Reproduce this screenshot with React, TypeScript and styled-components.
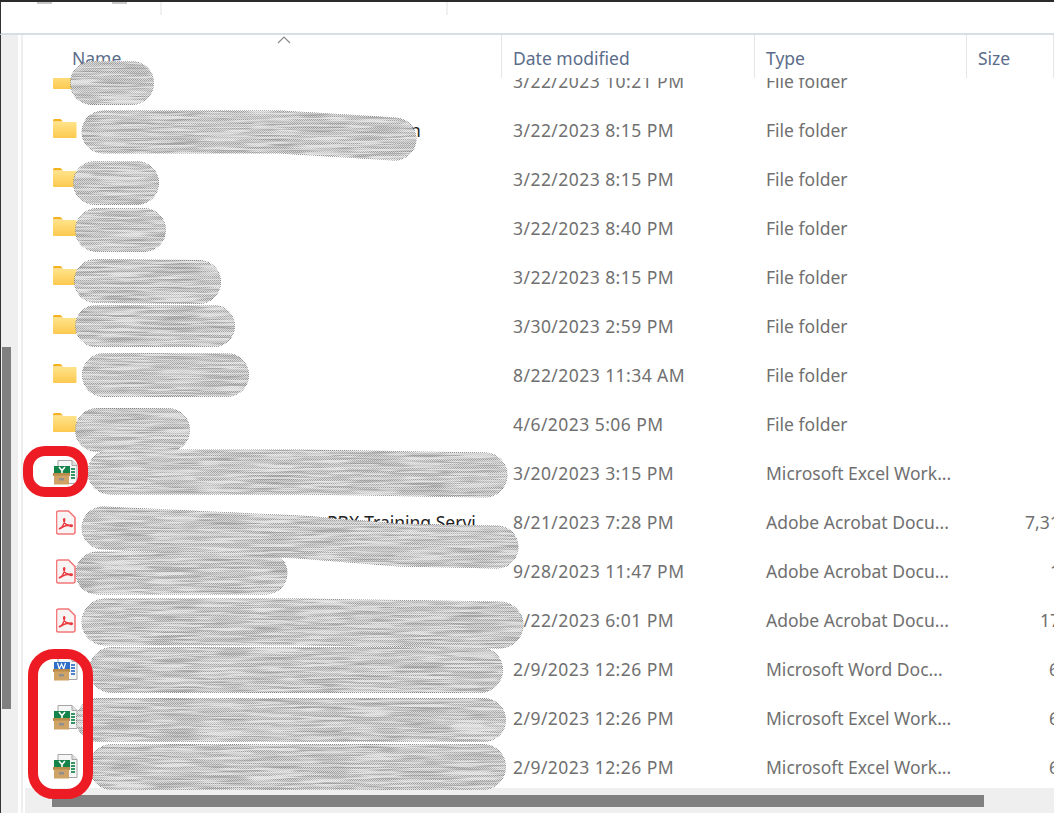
import React from 'react';
import styled, { createGlobalStyle } from 'styled-components';

const GlobalStyle = createGlobalStyle`
	html, body {
		margin: 0;
		padding: 0;
		background: #fff;
	}
	body {
		font-family: "Noto Sans", "Open Sans", sans-serif;
	}
`;

const Frame = styled.div`
	position: relative;
	width: 1054px;
	height: 820px;
	overflow: hidden;
	display: flex;
	flex-direction: column;
	background: #fff;
`;

const Toolbar = styled.div`
	height: 31px;
	flex: none;
	display: flex;
	border-top: 2px solid #2b2b2b;
	border-bottom: 2px solid #d6dee6;
	border-left: 1px solid #333;
`;

const ToolbarGroup = styled.div<{ $width: number }>`
	width: ${(p) => p.$width}px;
	height: 13px;
	flex: none;
	display: flex;
	gap: 60px;
	padding-left: 36px;
	box-sizing: border-box;
	border-right: 2px solid #f0f0f0;
`;

const ToolbarStub = styled.span`
	width: 15px;
	height: 2px;
	background: #c9c9c9;
`;

const Body = styled.div`
	height: 778px;
	flex: none;
	display: flex;
`;

const Rail = styled.div`
	width: 25px;
	flex: none;
	display: flex;
`;

const RailTrack = styled.div`
	width: 18px;
	box-sizing: border-box;
	padding: 312px 7px 0 1px;
	background: #efefef;
	border-left: 1px solid #333;
`;

const RailThumb = styled.div`
	height: 362px;
	width: 9px;
	background: #808080;
`;

const RailEdge = styled.div`
	width: 2px;
	margin-left: 3px;
	background: #eeeeee;
`;

const Main = styled.div`
	flex: 1;
	min-width: 0;
	display: flex;
	flex-direction: column;
`;

const Columns = styled.div`
	display: grid;
	grid-template-columns: 477px 253px 212px 87px;
`;

const Header = styled(Columns)`
	position: relative;
	height: 43px;
	flex: none;
	background: #fff;
	z-index: 1;
`;

const HeaderCell = styled.div<{ $first?: boolean }>`
	display: flex;
	align-items: center;
	box-sizing: border-box;
	padding-left: ${(p) => (p.$first ? 47 : 11)}px;
	padding-top: 2px;
	border-right: 1px solid #e6e6e6;
	font-size: 17.5px;
	color: #5b6d8a;
	white-space: nowrap;
`;

const SortCaret = styled.svg`
	position: absolute;
	left: 252px;
	top: 1px;
	width: 14px;
	height: 8px;
`;

const List = styled.div`
	flex: 1;
	min-height: 0;
	overflow: hidden;
`;

const ListInner = styled.div`
	margin-top: -22px;
`;

const Row = styled(Columns)`
	height: 49px;
	align-items: center;
	font-size: 17.5px;
	color: #707070;
	white-space: nowrap;
`;

const NameCell = styled.div`
	height: 100%;
	display: flex;
	align-items: center;
	padding-left: 28px;
	color: #222;
`;

const NameText = styled.span<{ $indent: number }>`
	margin-left: ${(p) => p.$indent}px;
`;

const DateCell = styled.div`
	padding-left: 11px;
	letter-spacing: 0.45px;
	overflow: hidden;
`;

const Cell = styled.div`
	padding-left: 11px;
	overflow: hidden;
`;

const SizeCell = styled.div<{ $indent: number }>`
	padding-left: ${(p) => p.$indent}px;
	overflow: hidden;
`;

const BottomBar = styled.div`
	height: 25px;
	flex: none;
	box-sizing: border-box;
	padding: 7px 70px 6px 27px;
	background: #efefef;
`;

const BottomThumb = styled.div`
	height: 12px;
	background: #808080;
`;

const Overlay = styled.svg`
	position: absolute;
	left: 0;
	top: 0;
	width: 1054px;
	height: 820px;
	z-index: 2;
	pointer-events: none;
`;

const FolderIcon = () => (
	<svg width="24" height="19" viewBox="0 0 24 19" style={{ marginTop: -2, flex: 'none' }}>
		<path d="M0 1.5A1.5 1.5 0 0 1 1.5 0h6l2.5 2.5H0z" fill="#f6b21d" />
		<path d="M0 3h23.5v15a1 1 0 0 1-1 1H1a1 1 0 0 1-1-1z" fill="url(#folderFill)" />
	</svg>
);

const PdfIcon = () => (
	<svg width="20" height="25" viewBox="0 0 20 25" style={{ marginLeft: 3, marginTop: 1, flex: 'none' }}>
		<path d="M2.5 1h10L19 7.5v14.5a2 2 0 0 1-2 2H2.5a2 2 0 0 1-2-2V3a2 2 0 0 1 2-2z" fill="#f8f4f4" stroke="#f4777a" strokeWidth="1.6" />
		<path
			d="M3.500 18.500c2-.6 4.500-4 5.200-8.500.2-1.400-1-1.600-1.100-.4-.3 3 3.300 6.600 7.800 6.800 1.300 0 1.200-1.400-.2-1.400-3.500 0-8 1.500-10.300 3.200-1.200.9-1.800.6-1.400.3z"
			fill="none"
			stroke="#ea3a3f"
			strokeWidth="1.500"
		/>
	</svg>
);

const PackageIcon = ({ color, letter }: { color: string; letter: 'X' | 'W' }) => (
	<svg width="26" height="26" viewBox="0 0 26 26" style={{ marginTop: 0, flex: 'none' }}>
		<path d="M5 .5h14l5 5v18H5z" fill="#f6f6f6" stroke="#a5a5a5" />
		<path d="M19 .5v5h5" fill="#e0e0e0" stroke="#a5a5a5" />
		<g fill={color} opacity="0.85">
			<rect x="18" y="8" width="4" height="2" />
			<rect x="18" y="11" width="4" height="2" />
			<rect x="18" y="14" width="4" height="2" />
			<rect x="18" y="17" width="4" height="2" />
		</g>
		<rect x="1" y="6" width="16" height="8" fill={color} />
		{letter === 'X' ? (
			<path d="M6 7l3 3.500L12 7M9 10.500V14" fill="none" stroke="#fff" strokeWidth="1.600" />
		) : (
			<path d="M4.500 7l1.800 6 2.200-5 2.200 5 1.800-6" fill="none" stroke="#fff" strokeWidth="1.200" />
		)}
		<rect x="0" y="13" width="17" height="3" fill="#b98c4c" />
		<rect x="1" y="15.500" width="15" height="9" fill="#cfa265" />
		<rect x="6" y="18" width="5" height="2.500" fill="#8f8f8f" />
	</svg>
);

type Kind = 'folder' | 'pdf' | 'excel' | 'word';

type Entry = {
	kind: Kind;
	date: string;
	type: string;
	size?: string;
	sizeIndent?: number;
	name?: string;
	nameIndent?: number;
};

const ENTRIES: Entry[] = [
	{ kind: 'folder', date: '3/22/2023 10:21 PM', type: 'File folder' },
	{ kind: 'folder', date: '3/22/2023 8:15 PM', type: 'File folder', name: 'n', nameIndent: 333 },
	{ kind: 'folder', date: '3/22/2023 8:15 PM', type: 'File folder' },
	{ kind: 'folder', date: '3/22/2023 8:40 PM', type: 'File folder' },
	{ kind: 'folder', date: '3/22/2023 8:15 PM', type: 'File folder' },
	{ kind: 'folder', date: '3/30/2023 2:59 PM', type: 'File folder' },
	{ kind: 'folder', date: '8/22/2023 11:34 AM', type: 'File folder' },
	{ kind: 'folder', date: '4/6/2023 5:06 PM', type: 'File folder' },
	{ kind: 'excel', date: '3/20/2023 3:15 PM', type: 'Microsoft Excel Work...' },
	{ kind: 'pdf', date: '8/21/2023 7:28 PM', type: 'Adobe Acrobat Docu...', size: '7,31', sizeIndent: 58, name: 'PBX-Training Servi', nameIndent: 251 },
	{ kind: 'pdf', date: '9/28/2023 11:47 PM', type: 'Adobe Acrobat Docu...', size: '1', sizeIndent: 83 },
	{ kind: 'pdf', date: '3/22/2023 6:01 PM', type: 'Adobe Acrobat Docu...', size: '17', sizeIndent: 73 },
	{ kind: 'word', date: '2/9/2023 12:26 PM', type: 'Microsoft Word Doc...', size: '6', sizeIndent: 82 },
	{ kind: 'excel', date: '2/9/2023 12:26 PM', type: 'Microsoft Excel Work...', size: '6', sizeIndent: 82 },
	{ kind: 'excel', date: '2/9/2023 12:26 PM', type: 'Microsoft Excel Work...', size: '6', sizeIndent: 82 },
];

// scribbled-over names, drawn by hand on the screenshot
const SCRIBBLES: { points: string; width: number }[] = [
	{ points: '92,83 132,83', width: 43 },
	{ points: '103,132 280,132 395,139', width: 42 },
	{ points: '95,183 137,183', width: 43 },
	{ points: '97,230 144,230', width: 43 },
	{ points: '96,281 199,282', width: 43 },
	{ points: '96,326 214,326', width: 41 },
	{ points: '104,375 227,375', width: 43 },
	{ points: '97,430 168,430', width: 43 },
	{ points: '110,472 300,472 485,475', width: 44 },
	{ points: '103,528 300,537 400,545 497,547', width: 42 },
	{ points: '97,573 266,573', width: 42 },
	{ points: '105,622 300,622 500,625', width: 46 },
	{ points: '112,670 480,670', width: 45 },
	{ points: '98,720 484,720', width: 43 },
	{ points: '112,767 483,767', width: 45 },
];

const renderIcon = (kind: Kind) => {
	if (kind === 'folder') return <FolderIcon />;
	if (kind === 'pdf') return <PdfIcon />;
	if (kind === 'word') return <PackageIcon color="#2f6fc9" letter="W" />;
	return <PackageIcon color="#14834a" letter="X" />;
};

const ScribbleStrokes = ({ grow }: { grow: number }) => (
	<>
		{SCRIBBLES.map((s) => (
			<polyline
				key={s.points}
				points={s.points}
				fill="none"
				stroke="#fff"
				strokeWidth={s.width + grow}
				strokeLinecap="round"
				strokeLinejoin="round"
			/>
		))}
	</>
);

const App: React.FC = () => {
	return (
		<Frame>
			<GlobalStyle />
			<svg width="0" height="0" style={{ position: 'absolute' }}>
				<defs>
					<linearGradient id="folderFill" x1="0" y1="0" x2="0" y2="1">
						<stop offset="0" stopColor="#ffe38a" />
						<stop offset="1" stopColor="#fcc94f" />
					</linearGradient>
				</defs>
			</svg>
			<Toolbar>
				<ToolbarGroup $width={161}>
					<ToolbarStub />
					<ToolbarStub />
				</ToolbarGroup>
				<ToolbarGroup $width={286} />
			</Toolbar>
			<Body>
				<Rail>
					<RailTrack>
						<RailThumb />
					</RailTrack>
					<RailEdge />
				</Rail>
				<Main>
					<Header>
						<HeaderCell $first>Name</HeaderCell>
						<HeaderCell>Date modified</HeaderCell>
						<HeaderCell>Type</HeaderCell>
						<HeaderCell>Size</HeaderCell>
						<SortCaret viewBox="0 0 14 8">
							<path d="M1 7l6-6 6 6" fill="none" stroke="#8a8a8a" strokeWidth="1.200" />
						</SortCaret>
					</Header>
					<List>
						<ListInner>
							{ENTRIES.map((entry, i) => (
								<Row key={i}>
									<NameCell>
										{renderIcon(entry.kind)}
										{entry.name && <NameText $indent={entry.nameIndent ?? 0}>{entry.name}</NameText>}
									</NameCell>
									<DateCell>{entry.date}</DateCell>
									<Cell>{entry.type}</Cell>
									<SizeCell $indent={entry.sizeIndent ?? 0}>{entry.size}</SizeCell>
								</Row>
							))}
						</ListInner>
					</List>
					<BottomBar>
						<BottomThumb />
					</BottomBar>
				</Main>
			</Body>
			<Overlay viewBox="0 0 1054 820">
				<defs>
					<pattern id="dither" width="2" height="4" patternUnits="userSpaceOnUse">
						<rect width="2" height="4" fill="#d8d8d8" />
						<rect width="1" height="1" fill="#a6a6a6" />
						<rect x="1" y="1" width="1" height="1" fill="#b8b8b8" />
						<rect y="2" width="1" height="1" fill="#b0b0b0" />
						<rect x="1" y="3" width="1" height="1" fill="#9c9c9c" />
					</pattern>
					<pattern id="edgeDots" width="2" height="2" patternUnits="userSpaceOnUse">
						<rect width="1" height="1" fill="#666" />
						<rect x="1" y="1" width="1" height="1" fill="#888" />
					</pattern>
					<filter id="lightStreaks" x="0" y="0" width="100%" height="100%" colorInterpolationFilters="sRGB">
						<feTurbulence type="fractalNoise" baseFrequency="0.02 0.55" numOctaves="2" seed="9" />
						<feColorMatrix values="0 0 0 0 1  0 0 0 0 1  0 0 0 0 1  7 0 0 0 -3.300" />
					</filter>
					<filter id="darkStreaks" x="0" y="0" width="100%" height="100%" colorInterpolationFilters="sRGB">
						<feTurbulence type="fractalNoise" baseFrequency="0.02 0.6" numOctaves="2" seed="3" />
						<feColorMatrix values="0 0 0 0 0.55  0 0 0 0 0.55  0 0 0 0 0.55  6 0 0 0 -3.100" />
					</filter>
					<mask id="scribbleMask" maskUnits="userSpaceOnUse" x="0" y="0" width="1054" height="820">
						<ScribbleStrokes grow={0} />
					</mask>
					<mask id="edgeMask" maskUnits="userSpaceOnUse" x="0" y="0" width="1054" height="820">
						<ScribbleStrokes grow={1} />
					</mask>
				</defs>
				<rect width="1054" height="820" fill="url(#edgeDots)" mask="url(#edgeMask)" />
				<g mask="url(#scribbleMask)">
					<rect width="1054" height="820" fill="url(#dither)" />
					<rect width="1054" height="820" filter="url(#darkStreaks)" opacity="0.45" />
					<rect width="1054" height="820" filter="url(#lightStreaks)" opacity="0.5" />
				</g>
				<rect x="28" y="451" width="55" height="41" rx="17" fill="none" stroke="#ed1c24" strokeWidth="10" />
				<rect x="33" y="654" width="55" height="140" rx="21" fill="none" stroke="#ed1c24" strokeWidth="10" />
			</Overlay>
		</Frame>
	);
};

export default App;
